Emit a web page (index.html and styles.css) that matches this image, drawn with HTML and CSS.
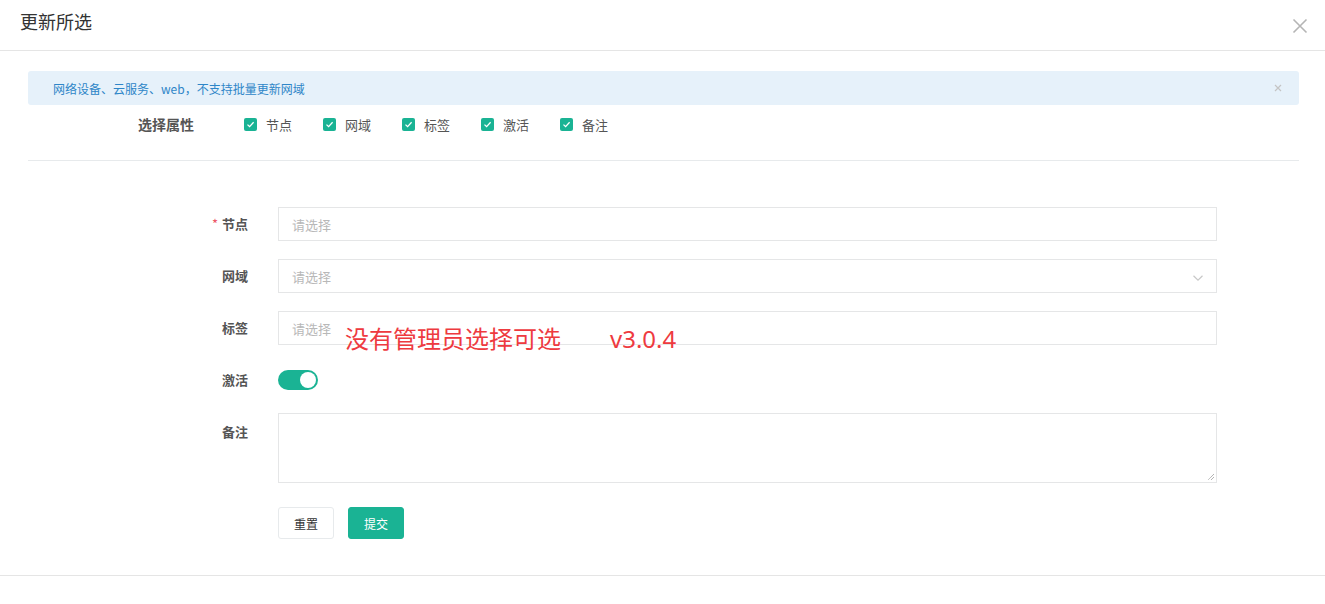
FILE: index.html
```html
<!DOCTYPE html>
<html lang="zh-CN">
<head>
<meta charset="utf-8">
<title>更新所选</title>
<link rel="stylesheet" href="styles.css">
</head>
<body>
<div class="modal">
  <div class="modal-header">
    <h4 class="modal-title">更新所选</h4>
    <span class="modal-close">
      <svg width="16" height="16" viewBox="0 0 16 16"><path d="M1.5 1.5L14.5 14.5M14.5 1.5L1.5 14.5" stroke="#b5b5b5" stroke-width="1.6" fill="none"/></svg>
    </span>
  </div>
  <div class="modal-body">
    <div class="alert">
      <span class="alert-text">网络设备、云服务、web，不支持批量更新网域</span>
      <span class="alert-close">
        <svg width="8" height="8" viewBox="0 0 8 8"><path d="M1 1L7 7M7 1L1 7" stroke="#c4c4c4" stroke-width="1.2" fill="none"/></svg>
      </span>
    </div>
    <div class="attr-row">
      <span class="attr-label">选择属性</span>
      <div class="checks">
        <label class="check"><span class="box"><svg width="9" height="9" viewBox="0 0 9 9"><path d="M1.5 4.6L3.6 6.6L7.6 2.3" stroke="#fff" stroke-width="1.3" fill="none"/></svg></span>节点</label>
        <label class="check"><span class="box"><svg width="9" height="9" viewBox="0 0 9 9"><path d="M1.5 4.6L3.6 6.6L7.6 2.3" stroke="#fff" stroke-width="1.3" fill="none"/></svg></span>网域</label>
        <label class="check"><span class="box"><svg width="9" height="9" viewBox="0 0 9 9"><path d="M1.5 4.6L3.6 6.6L7.6 2.3" stroke="#fff" stroke-width="1.3" fill="none"/></svg></span>标签</label>
        <label class="check"><span class="box"><svg width="9" height="9" viewBox="0 0 9 9"><path d="M1.5 4.6L3.6 6.6L7.6 2.3" stroke="#fff" stroke-width="1.3" fill="none"/></svg></span>激活</label>
        <label class="check"><span class="box"><svg width="9" height="9" viewBox="0 0 9 9"><path d="M1.5 4.6L3.6 6.6L7.6 2.3" stroke="#fff" stroke-width="1.3" fill="none"/></svg></span>备注</label>
      </div>
    </div>
    <div class="divider"></div>

    <form class="form">
      <div class="form-row">
        <label class="form-label"><span class="req">*</span>节点</label>
        <div class="input"><span class="ph">请选择</span></div>
      </div>
      <div class="form-row">
        <label class="form-label">网域</label>
        <div class="input select"><span class="ph">请选择</span>
          <svg class="chev" width="12" height="8" viewBox="0 0 12 8"><path d="M1.5 1.8L6 6.2L10.5 1.8" stroke="#c8c8c8" stroke-width="1.2" fill="none"/></svg>
        </div>
      </div>
      <div class="form-row tag-row">
        <label class="form-label">标签</label>
        <div class="input"><span class="ph">请选择</span></div>
        <div class="note">没有管理员选择可选<span class="ver">v3.0.4</span></div>
      </div>
      <div class="form-row">
        <label class="form-label">激活</label>
        <div class="switch-wrap"><span class="switch"><span class="knob"></span></span></div>
      </div>
      <div class="form-row">
        <label class="form-label">备注</label>
        <div class="textarea">
          <svg class="grip" width="9" height="9" viewBox="0 0 9 9"><path d="M8 2L2 8M8 5L5 8" stroke="#777" stroke-width="0.8" stroke-dasharray="1 0.6" fill="none"/></svg>
        </div>
      </div>
      <div class="form-row buttons">
        <span class="form-label"></span>
        <div class="btns">
          <button type="button" class="btn btn-default">重置</button>
          <button type="button" class="btn btn-primary">提交</button>
        </div>
      </div>
    </form>
  </div>
  <div class="modal-footer"></div>
</div>
</body>
</html>
```

FILE: styles.css
```css
* { box-sizing: border-box; }
html, body {
  margin: 0;
  padding: 0;
  background: #fff;
  font-family: "Noto Sans CJK SC", "Open Sans", "Liberation Sans", sans-serif;
  color: #676a6c;
}
.modal { width: 1325px; }
.modal-header {
  height: 51px;
  border-bottom: 1px solid #e5e5e5;
  display: flex;
  align-items: center;
  justify-content: space-between;
  padding: 0 17px 0 20px;
}
.modal-title {
  margin: 0;
  font-size: 18px;
  font-weight: 400;
  color: #333;
  position: relative;
  top: -4px;
}
.modal-close { display: flex; align-items: center; margin-top: 2px; }
.modal-body { padding: 20px 26px 0 28px; }
.alert {
  height: 34px;
  background: #e6f1fa;
  border-radius: 3px;
  display: flex;
  align-items: center;
  justify-content: space-between;
  padding: 0 17px 0 25px;
}
.alert-text { font-size: 12px; color: #2e86c8; }
.alert-close { display: flex; align-items: center; }
.attr-row {
  height: 40px;
  display: flex;
  align-items: center;
  padding-left: 110px;
  padding-bottom: 2px;
}
.attr-label {
  font-size: 14px;
  font-weight: 700;
  color: #555;
  width: 106px;
}
.checks { display: flex; gap: 31px; }
.check {
  display: flex;
  align-items: center;
  gap: 9px;
  font-size: 13px;
  color: #555;
  width: 48px;
  white-space: nowrap;
}
.box {
  width: 13px;
  height: 13px;
  border-radius: 2px;
  background: #1ab394;
  display: flex;
  align-items: center;
  justify-content: center;
}
.divider {
  margin-top: 15px;
  height: 1px;
  background: #e7eaec;
}
.form { padding-top: 46px; }
.form-row {
  display: flex;
  align-items: flex-start;
  gap: 30px;
  margin-bottom: 18px;
  position: relative;
}
.form-label {
  width: 220px;
  text-align: right;
  font-size: 13px;
  font-weight: 700;
  color: #555;
  line-height: 34px;
  height: 34px;
}
.req { color: #ed5565; font-weight: 400; margin-right: 4px; }
.input {
  width: 939px;
  height: 34px;
  border: 1px solid #e5e6e7;
  display: flex;
  align-items: center;
  justify-content: space-between;
  padding: 0 12px 0 13px;
}
.ph { font-size: 13px; color: #b8b8b8; }
.chev { margin-top: 4px; }
.note {
  position: absolute;
  left: 317px;
  top: 10px;
  font-size: 24px;
  color: #ee3a3f;
  line-height: 34px;
  white-space: nowrap;
}
.ver {
  margin-left: 49px;
  font-family: "Noto Sans", "Open Sans", sans-serif;
}
.switch-wrap { height: 34px; display: flex; align-items: center; }
.switch {
  width: 40px;
  height: 20px;
  border-radius: 10px;
  background: #1ab394;
  display: flex;
  align-items: center;
  justify-content: flex-end;
  padding-right: 2px;
}
.knob {
  width: 16px;
  height: 16px;
  border-radius: 50%;
  background: #fff;
}
.textarea {
  width: 939px;
  height: 70px;
  border: 1px solid #e5e6e7;
  position: relative;
  margin-top: -2px;
}
.grip { position: absolute; right: 1px; bottom: 1px; }
.buttons { margin-top: 24px; margin-bottom: 0; }
.buttons .form-label { height: 32px; }
.btns { display: flex; gap: 14px; }
.btn {
  height: 32px;
  width: 56px;
  border-radius: 3px;
  font-family: inherit;
  font-size: 12px;
  padding: 0;
  cursor: pointer;
}
.btn-default { background: #fff; border: 1px solid #e7eaec; color: #333; }
.btn-primary { background: #1ab394; border: 1px solid #1ab394; color: #fff; }
.modal-footer {
  margin-top: 36px;
  height: 1px;
  background: #e5e5e5;
}
```
